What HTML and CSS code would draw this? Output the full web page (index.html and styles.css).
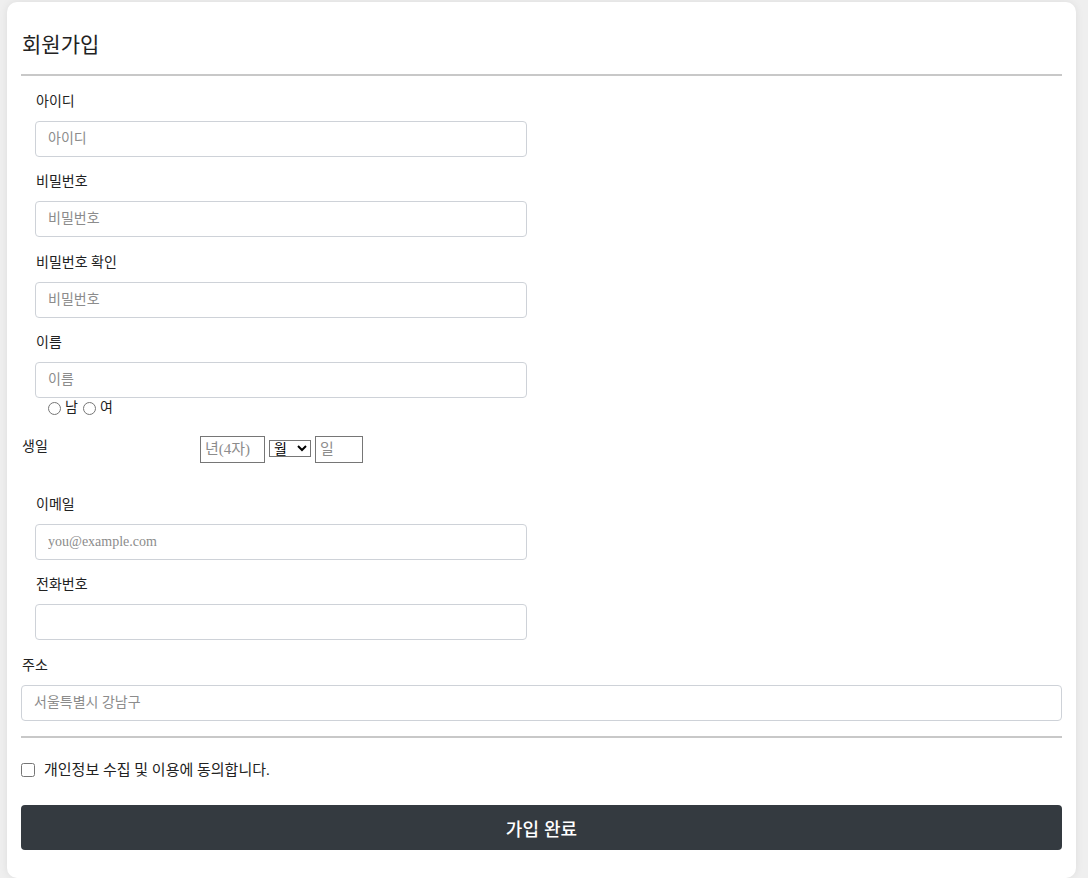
FILE: index.html
```html
<!DOCTYPE html>
<html lang="ko">
<head>
<meta charset="utf-8">
<title>회원가입</title>
<link rel="stylesheet" href="styles.css">
</head>
<body>
<div class="card">
  <h1 class="title">회원가입</h1>
  <hr class="rule">

  <div class="group indent">
    <label class="label" for="uid">아이디</label>
    <input class="field" id="uid" type="text" placeholder="아이디">
  </div>
  <div class="group indent">
    <label class="label" for="pw">비밀번호</label>
    <input class="field" id="pw" type="password" placeholder="비밀번호">
  </div>
  <div class="group indent loose">
    <label class="label" for="pw2">비밀번호 확인</label>
    <input class="field" id="pw2" type="password" placeholder="비밀번호">
  </div>
  <div class="group indent">
    <label class="label" for="name">이름</label>
    <input class="field" id="name" type="text" placeholder="이름">
    <div class="gender">
      <label class="radio"><input type="radio" name="g"> 남</label>
      <label class="radio"><input type="radio" name="g"> 여</label>
    </div>
  </div>

  <div class="birth">
    <span class="birth-label">생일</span>
    <div class="birth-fields">
      <input class="small year" type="text" placeholder="년(4자)">
      <select class="month">
        <option>월</option>
      </select>
      <input class="small day" type="text" placeholder="일">
    </div>
  </div>

  <div class="group indent after-birth">
    <label class="label" for="mail">이메일</label>
    <input class="field" id="mail" type="email" placeholder="you@example.com">
  </div>
  <div class="group indent">
    <label class="label" for="tel">전화번호</label>
    <input class="field" id="tel" type="tel">
  </div>
  <div class="group loose">
    <label class="label" for="addr">주소</label>
    <input class="field wide" id="addr" type="text" placeholder="서울특별시 강남구">
  </div>

  <hr class="rule rule-bottom">

  <label class="agree"><input type="checkbox" class="check"> 개인정보 수집 및 이용에 동의합니다.</label>

  <button class="submit" type="button">가입 완료</button>
</div>
</body>
</html>
```

FILE: styles.css
```css
html, body {
  margin: 0;
  padding: 0;
}
body {
  background: #efefef;
  font-family: "Liberation Serif", "Noto Sans CJK KR", serif;
  color: #222;
  font-size: 14px;
}
.card {
  box-sizing: border-box;
  width: 1069px;
  margin: 2px 0 0 7px;
  padding: 30px 14px 28px 14px;
  background: #fff;
  border-radius: 10px;
  box-shadow: 0 0 8px rgba(0, 0, 0, 0.08);
}
.title {
  margin: 0;
  font-size: 21px;
  font-weight: normal;
  line-height: 26px;
  color: #222;
  padding-left: 1px;
}
.rule {
  margin: 16px 0 0 0;
  border: 0;
  height: 2px;
  background: #c8c8c8;
}
.group {
  display: flex;
  flex-direction: column;
  align-items: flex-start;
  margin-top: 13px;
}
.group.loose {
  margin-top: 14px;
}
.rule + .group {
  margin-top: 14px;
}
.indent {
  padding-left: 14px;
}
.label {
  display: block;
  line-height: 20px;
  font-size: 14px;
  padding: 2px 0 0 1px;
  margin-bottom: 9px;
}
.field {
  box-sizing: border-box;
  width: 492px;
  height: 36px;
  margin: 0;
  padding: 0 12px;
  border: 1px solid #ced2d8;
  border-radius: 4px;
  font-family: inherit;
  font-size: 14px;
  color: #222;
  background: #fff;
}
.field.wide {
  width: 100%;
}
.field::placeholder,
.small::placeholder {
  color: #8c8c8c;
}
.gender {
  display: flex;
  align-items: center;
  gap: 5px;
  margin-top: 3px;
  padding-left: 13px;
  height: 14px;
  font-size: 14px;
  line-height: 14px;
}
.radio {
  display: flex;
  align-items: center;
  gap: 4px;
}
.radio input {
  margin: 0;
  width: 13px;
  height: 13px;
}
.birth {
  display: flex;
  align-items: flex-start;
  margin-top: 21px;
}
.birth-label {
  width: 178px;
  line-height: 20px;
  padding: 1px 0 0 1px;
}
.birth-fields {
  display: flex;
  align-items: flex-start;
  gap: 4px;
}
.small {
  box-sizing: border-box;
  height: 27px;
  margin: 0;
  padding: 0 4px;
  border: 1px solid #767676;
  border-radius: 0;
  font-family: inherit;
  font-size: 15px;
  background: #fff;
}
.year {
  width: 65px;
}
.day {
  width: 48px;
}
.month {
  box-sizing: border-box;
  width: 42px;
  height: 17px;
  margin: 4px 0 0 0;
  padding: 0;
  border: 1px solid #767676;
  border-radius: 0;
  font-family: inherit;
  font-size: 14px;
  color: #000;
  background: #fff;
}
.after-birth {
  margin-top: 30px;
}
.rule-bottom {
  margin-top: 15px;
}
.agree {
  display: flex;
  align-items: center;
  gap: 9px;
  margin-top: 22px;
  line-height: 20px;
  font-size: 15px;
}
.check {
  margin: 0;
  width: 14px;
  height: 14px;
}
.submit {
  display: block;
  width: 100%;
  height: 45px;
  margin-top: 25px;
  border: 0;
  border-radius: 4px;
  background: #343a40;
  color: #fff;
  font-family: "Noto Sans CJK KR", "Noto Sans", sans-serif;
  font-size: 18px;
  font-weight: 500;
}
```
